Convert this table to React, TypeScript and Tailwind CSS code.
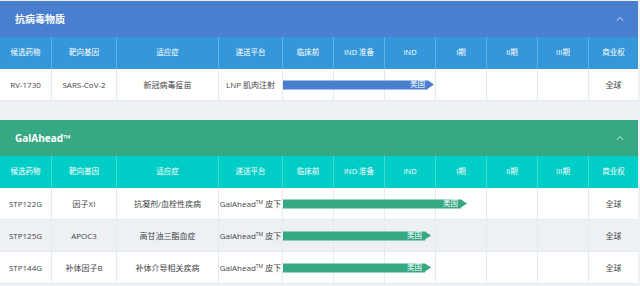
import { ChevronUp } from "lucide-react";

const cols = "grid grid-cols-[51px_65px_102px_64px_51px_51px_51px_51px_51px_51px_50px]";
const heads = ["候选药物", "靶向基因", "适应症", "递送平台", "临床前", "IND 准备", "IND", "I期", "II期", "III期", "商业权"];

type Row = { id: string; gene: string; ind: string; plat: React.ReactNode; bar: number; shade?: boolean };

function Bar({ w, color }: { w: number; color: string }) {
  return (
    <div className="absolute left-0 top-1/2 -translate-y-1/2 flex items-center" style={{ width: w }}>
      <div className={`h-[9px] flex-1 ${color} flex items-center justify-end pr-[3px]`}>
        <span className="text-[7.5px] leading-none text-white">美国</span>
      </div>
      <div className={`w-0 h-0 border-y-[4.5px] border-y-transparent border-l-[6px] ${color === "bg-[#4a7fcf]" ? "border-l-[#4a7fcf]" : "border-l-[#36a884]"}`} />
    </div>
  );
}

function Section({ title, top, head, bar, rows }: { title: string; top: string; head: string; bar: string; rows: Row[] }) {
  return (
    <section className="w-[638px] bg-white">
      <div className={`h-9 ${top} flex items-center justify-between pl-[15px] pr-[12px]`}>
        <h2 className="text-[10px] font-bold text-white">{title}</h2>
        <ChevronUp className="w-3 h-3 text-white" strokeWidth={1.5} />
      </div>
      <div className={`${cols} ${head} h-8`}>
        {heads.map((h, i) => (
          <div key={h} className={`flex items-center justify-center text-[7.5px] text-white ${i ? "border-l border-white/25" : ""}`}>
            {h}
          </div>
        ))}
      </div>
      {rows.map((r) => (
        <div key={r.id} className={`${cols} h-8 border-b border-[#e6eaee] ${r.shade ? "bg-[#eef1f4]" : "bg-white"} text-[8px] text-[#444] whitespace-nowrap`}>
          <div className="flex items-center justify-center">{r.id}</div>
          <div className="flex items-center justify-center border-l border-[#e6eaee]">{r.gene}</div>
          <div className="flex items-center justify-center border-l border-[#e6eaee]">{r.ind}</div>
          <div className="flex items-center justify-center border-l border-[#e6eaee]">{r.plat}</div>
          <div className="relative border-l border-[#e6eaee]">
            <Bar w={r.bar} color={bar} />
          </div>
          {[0, 1, 2, 3, 4].map((k) => (
            <div key={k} className="border-l border-[#e6eaee]" />
          ))}
          <div className="flex items-center justify-center border-l border-[#e6eaee]">全球</div>
        </div>
      ))}
    </section>
  );
}

const gal = (
  <span>
    GalAhead<sup className="text-[5px]">TM</sup> 皮下
  </span>
);

export default function App() {
  return (
    <main
      className="w-[640px] h-[286px] bg-[#eef1f5] pt-px flex flex-col gap-[19px] overflow-hidden"
      style={{ fontFamily: '"Open Sans", "Noto Sans CJK SC", sans-serif' }}
    >
      <Section
        title="抗病毒物质"
        top="bg-[#4a7fcf]"
        head="bg-[#3497d9]"
        bar="bg-[#4a7fcf]"
        rows={[{ id: "RV-1730", gene: "SARS-CoV-2", ind: "新冠病毒疫苗", plat: "LNP 肌肉注射", bar: 151 }]}
      />
      <Section
        title="GalAhead™"
        top="bg-[#36a884]"
        head="bg-[#00cdc6]"
        bar="bg-[#36a884]"
        rows={[
          { id: "STP122G", gene: "因子XI", ind: "抗凝剂/血栓性疾病", plat: gal, bar: 184 },
          { id: "STP125G", gene: "APOC3", ind: "高甘油三酯血症", plat: gal, bar: 148, shade: true },
          { id: "STP144G", gene: "补体因子B", ind: "补体介导相关疾病", plat: gal, bar: 148 },
        ]}
      />
    </main>
  );
}
